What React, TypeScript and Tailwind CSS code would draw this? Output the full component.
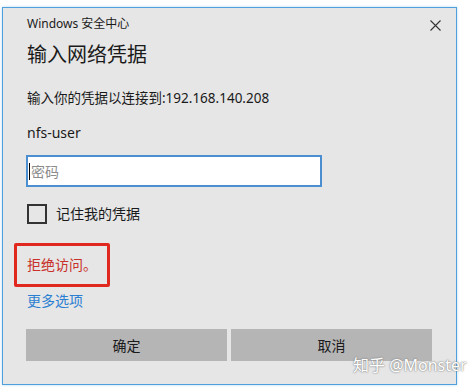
import React from "react";

const font = "font-['Noto_Sans','Noto_Sans_CJK_SC',sans-serif]";

export default function App() {
  return (
    <div className={`w-[471px] h-[387px] bg-white relative overflow-hidden ${font}`}>
      <div className="ml-[2px] mt-[7px] w-[455px] h-[378px] border border-[#4f9fdc] bg-[#e6e6e6] flex flex-col pl-[24px] shadow-[0_0_3px_#b9dcf5]">
        {/* title bar */}
        <div className="flex items-center justify-between pt-[7px] pr-[15px]">
          <div className="text-[12px] leading-[18px] text-[#1a1a1a]">Windows 安全中心</div>
          <svg width="11" height="11" viewBox="0 0 11 11" className="mt-[2px]">
            <path d="M0.5 0.5 L10.5 10.5 M10.5 0.5 L0.5 10.5" stroke="#333" strokeWidth="1.1" />
          </svg>
        </div>

        <div className="mt-[8px] text-[20px] leading-[28px] text-[#1a1a1a]">输入网络凭据</div>

        <div className="mt-[19px] text-[13.5px] leading-[20px] text-[#1a1a1a]">
          输入你的凭据以连接到:192.168.140.208
        </div>

        <div className="mt-[15px] text-[14px] leading-[20px] text-[#1a1a1a]">nfs-user</div>

        <div className="mt-[12px] ml-[-1px] w-[296px] h-[32px] border-2 border-[#4b8fd1] bg-white flex items-center pl-[1px]">
          <div className="w-[1px] h-[17px] bg-black" />
          <span className="text-[14px] text-[#8c8c8c] ml-[1px]">密码</span>
        </div>

        <div className="mt-[17px] flex items-center gap-[9px]">
          <div className="w-[20px] h-[20px] border-2 border-[#333]" />
          <span className="text-[14px] leading-[20px] text-[#1a1a1a]">记住我的凭据</span>
        </div>

        <div className="mt-[19px] ml-[-13px] w-[96px] h-[44px] border-[3px] border-[#e0281f] rounded-[2px] flex items-center pl-[10px]">
          <span className="text-[14px] leading-[20px] text-[#c9302a]">拒绝访问。</span>
        </div>

        <div className="mt-[4px] text-[14px] leading-[20px] text-[#2b7fd2]">更多选项</div>

        <div className="mt-[18px] ml-[-1px] flex gap-[4px]">
          <div className="w-[201px] h-[32px] bg-[#b5b5b5] flex items-center justify-center text-[14px] text-[#1a1a1a]">确定</div>
          <div className="w-[201px] h-[32px] bg-[#b5b5b5] flex items-center justify-center text-[14px] text-[#1a1a1a]">取消</div>
        </div>
      </div>

      {/* watermark */}
      <div className="absolute left-[353px] top-[355px] text-[16px] leading-[20px] text-white whitespace-nowrap [text-shadow:0_0_2px_#777,0_0_1px_#999]">
        知乎 @Monster
      </div>
    </div>
  );
}
